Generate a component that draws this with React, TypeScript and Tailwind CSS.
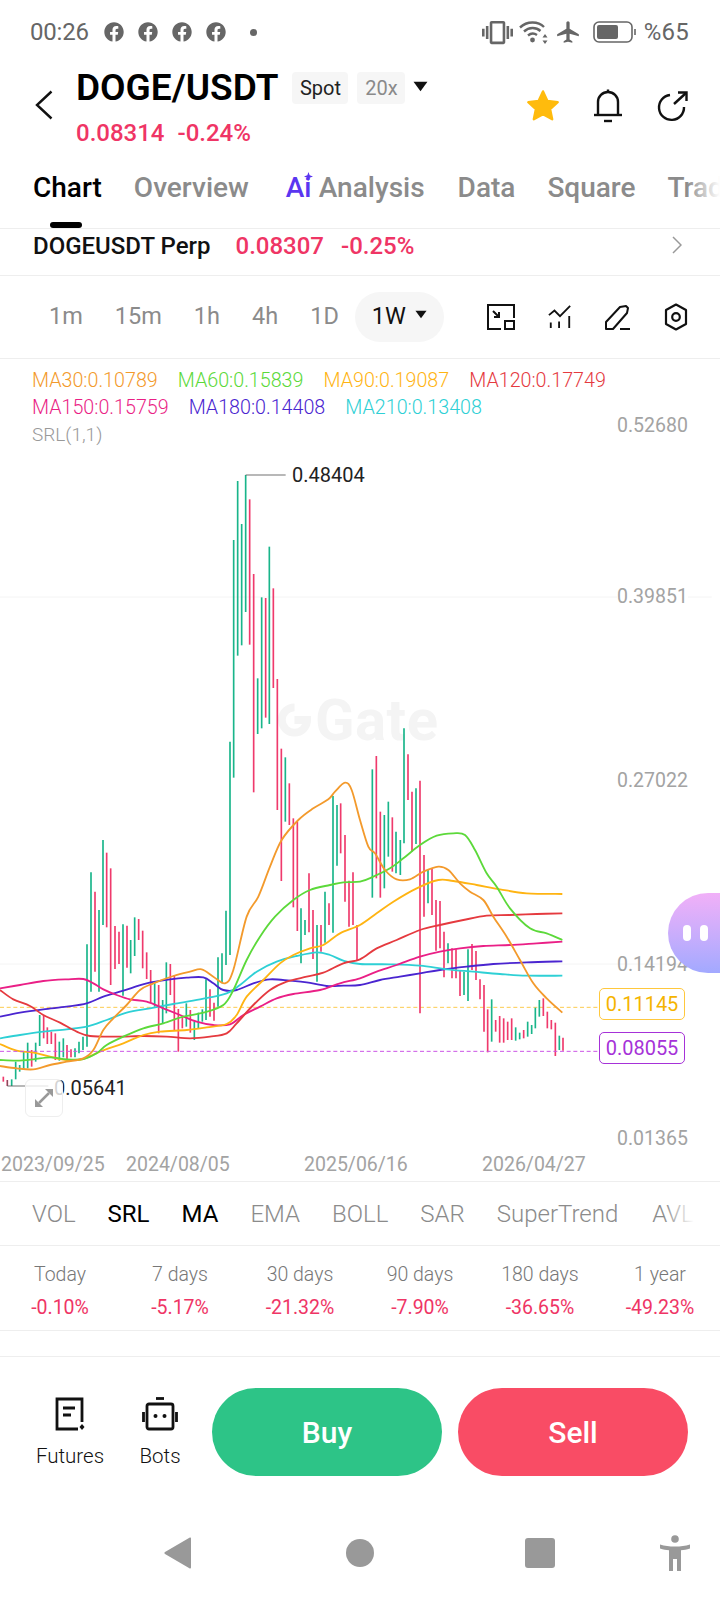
import { FaFacebook } from "react-icons/fa";
import { MdVibration, MdAirplanemodeActive } from "react-icons/md";

type Bar = [number, number, number, "g" | "r"];

// chart data is kept in 3x units, y = 0 sits at page y 820
const bars: Bar[] = [
  [10, 770, 785, "r"], [22, 780, 798, "r"], [35, 778, 798, "g"], [47, 725, 778, "g"], [59, 735, 755, "g"], [71, 695, 750, "g"],
  [83, 668, 745, "g"], [95, 690, 740, "r"], [107, 668, 725, "g"], [119, 585, 678, "g"], [131, 585, 655, "r"], [142, 622, 672, "r"],
  [154, 635, 672, "r"], [166, 640, 720, "r"], [178, 665, 722, "g"], [190, 655, 712, "g"], [201, 675, 720, "r"], [213, 688, 712, "r"],
  [225, 685, 712, "g"], [237, 665, 700, "g"], [249, 650, 690, "g"], [261, 373, 680, "g"], [273, 157, 515, "g"], [285, 215, 455, "r"],
  [297, 270, 515, "g"], [309, 60, 315, "g"], [320, 98, 322, "r"], [332, 145, 495, "r"], [345, 318, 447, "r"], [357, 335, 432, "r"],
  [369, 313, 527, "g"], [381, 317, 443, "r"], [392, 360, 460, "g"], [404, 292, 408, "g"], [416, 297, 360, "r"], [428, 332, 445, "r"],
  [440, 397, 477, "r"], [452, 450, 548, "r"], [464, 490, 560, "g"], [476, 495, 640, "r"], [488, 540, 610, "g"], [499, 427, 580, "g"],
  [511, 432, 525, "r"], [523, 465, 630, "r"], [535, 567, 695, "r"], [547, 590, 625, "r"], [559, 550, 620, "g"], [571, 570, 638, "r"],
  [583, 605, 660, "g"], [595, 578, 625, "g"], [607, 568, 605, "g"], [618, 478, 600, "g"], [630, 508, 590, "r"], [642, 548, 602, "r"],
  [654, 412, 560, "g"], [666, 400, 490, "g"], [678, 272, 435, "g"], [690, -235, 405, "g"], [701, -840, -127, "g"], [713, -1017, -493, "g"],
  [725, -888, -524, "g"], [737, -1035, -624, "g"], [749, -962, -526, "r"], [761, -738, -83, "r"], [773, -425, -258, "g"], [785, -668, -275, "g"],
  [797, -666, -307, "r"], [808, -820, -288, "g"], [820, -695, -396, "r"], [832, -423, -30, "r"], [844, -214, 183, "r"], [856, -188, 5, "g"],
  [868, -110, 15, "r"], [880, -5, 262, "r"], [892, 5, 333, "r"], [903, 265, 430, "g"], [915, 300, 345, "g"], [927, 160, 337, "r"],
  [939, 270, 417, "r"], [951, 315, 485, "g"], [963, 315, 395, "r"], [975, 215, 368, "g"], [987, 250, 315, "r"], [999, -72, 338, "g"],
  [1011, -45, 137, "g"], [1022, -50, 100, "r"], [1035, 45, 245, "r"], [1047, 182, 320, "r"], [1059, 157, 315, "r"], [1071, 315, 420, "r"],
  [1117, -152, 233, "g"], [1129, -192, 175, "r"], [1141, -25, 233, "r"], [1153, -15, 205, "g"], [1165, -55, 110, "g"], [1177, -8, 155, "r"],
  [1188, 35, 160, "g"], [1201, 60, 165, "g"], [1212, -275, 70, "g"], [1224, -197, -60, "r"], [1236, -85, 95, "r"], [1248, -95, 72, "g"],
  [1260, -118, 580, "r"], [1272, 105, 290, "r"], [1284, 150, 250, "g"], [1296, 145, 285, "r"], [1308, 240, 392, "r"], [1320, 243, 385, "r"],
  [1332, 335, 472, "r"], [1344, 370, 430, "g"], [1356, 385, 475, "r"], [1368, 388, 475, "r"], [1380, 450, 528, "r"], [1392, 455, 525, "g"],
  [1404, 388, 543, "g"], [1416, 372, 450, "r"], [1428, 393, 480, "r"], [1440, 478, 538, "r"], [1452, 495, 635, "r"], [1463, 568, 697, "r"],
  [1475, 538, 665, "g"], [1487, 600, 635, "r"], [1499, 588, 668, "r"], [1511, 595, 668, "r"], [1523, 605, 660, "r"], [1535, 595, 660, "r"],
  [1547, 622, 662, "g"], [1559, 638, 658, "g"], [1571, 630, 655, "r"], [1583, 605, 650, "g"], [1595, 615, 642, "g"], [1606, 563, 625, "g"],
  [1618, 540, 590, "g"], [1630, 535, 588, "r"], [1642, 575, 625, "r"], [1654, 600, 628, "r"], [1666, 608, 708, "r"], [1678, 647, 690, "g"],
  [1689, 653, 692, "r"],
];

const maLines: { color: string; pts: number[][] }[] = [
  { color: "#4a25d0", pts: [[0,590],[60,578],[130,568],[200,560],[260,550],[310,530],[370,512],[440,490],[510,478],[560,473],[610,472],[640,490],[670,510],[710,510],[760,490],[810,478],[870,482],[920,487],[980,498],[1030,497],[1080,495],[1140,480],[1200,470],[1260,460],[1320,450],[1400,440],[1480,432],[1580,427],[1687,424]] },
  { color: "#2ed0d5", pts: [[0,655],[60,645],[130,635],[200,628],[260,620],[320,600],[380,578],[450,565],[520,552],[600,538],[680,520],[720,495],[770,455],[830,425],[890,408],[950,397],[990,405],[1030,422],[1080,432],[1170,433],[1260,437],[1340,448],[1420,455],[1500,462],[1580,467],[1687,467]] },
  { color: "#ea1f86", pts: [[0,505],[60,495],[130,483],[200,478],[250,477],[280,490],[310,508],[350,525],[390,538],[440,545],[490,565],[540,585],[590,605],[640,615],[690,613],[730,585],[780,560],[830,535],[880,522],[960,510],[1020,490],[1080,475],[1130,455],[1190,435],[1260,410],[1320,395],[1380,385],[1450,378],[1530,375],[1610,370],[1687,365]] },
  { color: "#e53a3f", pts: [[0,510],[40,538],[90,558],[130,585],[180,608],[230,635],[270,648],[350,650],[430,648],[500,650],[570,655],[630,650],[680,640],[710,610],[760,555],[810,510],[860,485],[920,470],[970,458],[1030,430],[1080,418],[1130,385],[1190,360],[1260,330],[1320,315],[1390,300],[1460,287],[1530,285],[1610,282],[1687,280]] },
  { color: "#ffb412", pts: [[0,672],[50,692],[100,698],[150,710],[200,720],[250,717],[300,695],[370,670],[430,645],[480,635],[560,630],[620,622],[680,612],[710,585],[740,530],[790,480],[840,430],[880,405],[930,385],[970,375],[1020,340],[1080,315],[1130,280],[1180,245],[1250,205],[1315,180],[1360,183],[1430,195],[1500,208],[1580,220],[1687,222]] },
  { color: "#5cd93a", pts: [[0,720],[50,722],[100,718],[150,712],[200,718],[250,717],[290,700],[320,675],[370,650],[430,625],[490,610],[550,590],[610,578],[670,555],[700,510],[740,420],[780,350],[825,290],[880,240],[930,210],[990,195],[1030,187],[1080,185],[1120,170],[1170,145],[1210,115],[1260,75],[1310,47],[1360,40],[1395,45],[1425,90],[1460,160],[1490,200],[1530,265],[1590,325],[1640,340],[1687,360]] },
  { color: "#f39a2c", pts: [[0,738],[50,745],[100,748],[150,735],[200,725],[250,715],[280,690],[310,630],[340,595],[380,555],[420,510],[460,490],[520,468],[570,455],[605,448],[640,470],[675,490],[700,450],[740,290],[775,230],[810,140],[845,60],[895,0],[940,-35],[985,-62],[1005,-85],[1035,-112],[1055,-90],[1080,0],[1105,80],[1125,100],[1155,150],[1190,178],[1230,178],[1270,155],[1315,140],[1345,150],[1380,190],[1410,215],[1450,240],[1480,290],[1520,350],[1560,420],[1600,490],[1640,535],[1687,578]] },
];

// catmull-rom through the points, so the averages stay smooth
function smooth(pts: number[][]) {
  let d = `M${pts[0][0]} ${pts[0][1]}`;
  for (let i = 0; i < pts.length - 1; i++) {
    const p0 = pts[i - 1] || pts[i];
    const p1 = pts[i];
    const p2 = pts[i + 1];
    const p3 = pts[i + 2] || p2;
    const c1x = p1[0] + (p2[0] - p0[0]) / 6;
    const c1y = p1[1] + (p2[1] - p0[1]) / 6;
    const c2x = p2[0] - (p3[0] - p1[0]) / 6;
    const c2y = p2[1] - (p3[1] - p1[1]) / 6;
    d += ` C${c1x} ${c1y} ${c2x} ${c2y} ${p2[0]} ${p2[1]}`;
  }
  return d;
}

const stats = [
  ["Today", "-0.10%"],
  ["7 days", "-5.17%"],
  ["30 days", "-21.32%"],
  ["90 days", "-7.90%"],
  ["180 days", "-36.65%"],
  ["1 year", "-49.23%"],
];

function Triangle({ className }: { className: string }) {
  return (
    <svg viewBox="0 0 14 10" className={className} fill="currentColor">
      <path d="M0.5 0.5h13L7 9.5z" />
    </svg>
  );
}

function StatusBar() {
  return (
    <div className="flex h-[64px] items-center pl-[30px] pr-[31px] text-[#666]">
      <span className="w-[61px] text-[24px] tracking-[-0.2px]">00:26</span>
      <div className="ml-[13px] flex gap-[14px] text-[20px]">
        <FaFacebook />
        <FaFacebook />
        <FaFacebook />
        <FaFacebook />
      </div>
      <span className="ml-[24px] h-[7px] w-[7px] rounded-full bg-[#666]" />
      <div className="ml-auto flex items-center">
        <MdVibration className="text-[31px]" />
        <svg viewBox="0 0 30 26" className="ml-[6px] h-[26px] w-[30px]" fill="none" stroke="#666" strokeWidth="2.4">
          <path d="M1 8.5C8 2 19 2 25 8" />
          <path d="M5 12.5C10 8 17 8 21.5 12" />
          <path d="M9 16.5C12 14 15 14 18 16" />
          <circle cx="13.5" cy="21" r="2.4" fill="#666" stroke="none" />
          <path d="M26 15l2.5 3.5h-5zM26 25l2.5-3.5h-5z" fill="#666" stroke="none" />
        </svg>
        <MdAirplanemodeActive className="ml-[6px] text-[26px]" />
        <svg viewBox="0 0 44 22" className="ml-[12px] h-[22px] w-[44px]" fill="none">
          <rect x="1" y="1" width="38" height="20" rx="5" stroke="#666" strokeWidth="1.6" />
          <rect x="4" y="4" width="21" height="14" rx="2" fill="#666" />
          <path d="M42 8v6" stroke="#666" strokeWidth="1.6" />
        </svg>
        <span className="ml-[7px] text-[24px] tracking-[0.2px]">%65</span>
      </div>
    </div>
  );
}

function Header() {
  return (
    <div className="flex h-[92px] items-start">
      <svg viewBox="0 0 18 30" className="ml-[35px] mt-[26px] h-[30px] w-[18px]" fill="none" stroke="#111" strokeWidth="2.4">
        <path d="M16.5 1.5L2 15l14.5 13.5" />
      </svg>
      <div className="ml-[23px] pt-[1px]">
        <div className="flex items-center">
          <span className="text-[37px] font-semibold leading-[46px] text-black">DOGE/USDT</span>
          <span className="ml-[14px] flex h-[32px] w-[56px] items-center justify-center rounded-[4px] bg-[#f6f6f6] text-[20px] text-[#222]">Spot</span>
          <span className="ml-[9px] flex h-[32px] w-[48px] items-center justify-center rounded-[4px] bg-[#f6f6f6] text-[20px] text-[#8a8a8a]">20x</span>
          <Triangle className="ml-[8px] mb-[4px] h-[11px] w-[15px] text-[#111]" />
        </div>
        <div className="mt-[8px] flex text-[24px] font-medium leading-[28px] text-[#ef3565]">
          <span>0.08314</span>
          <span className="ml-[13px]">-0.24%</span>
        </div>
      </div>
      <div className="ml-auto mt-[23px] flex items-center pr-[31px]">
        <svg viewBox="0 0 24 24" className="h-[38px] w-[38px]" fill="#ffbb0d" stroke="#ffbb0d" strokeWidth="1.5" strokeLinejoin="round">
          <path d="M12 2.8l2.8 6 6.5.8-4.8 4.4 1.3 6.4L12 17.2l-5.8 3.2 1.3-6.4L2.700 9.600l6.500-.8z" />
        </svg>
        <svg viewBox="0 0 30 34" className="ml-[31px] h-[34px] w-[30px]" fill="none" stroke="#111" strokeWidth="2.400">
          <path d="M5 25V13a10 10 0 0 1 20 0v12" />
          <path d="M1 26h28" />
          <path d="M15 0.500v3" />
          <path d="M11 32h8" />
        </svg>
        <svg viewBox="0 0 32 32" className="ml-[34px] h-[32px] w-[32px]" fill="none" stroke="#111" strokeWidth="2.400">
          <path d="M27 17A12.500 12.500 0 1 1 13 5" />
          <path d="M17 14L29 3" />
          <path d="M21 2.500h8.500V11" />
        </svg>
      </div>
    </div>
  );
}

function Tabs() {
  return (
    <div className="relative h-[73px] overflow-hidden border-b border-[#eeeeee]">
      <div className="flex h-[64px] items-center gap-[32px] pl-[33px] text-[28px] font-medium whitespace-nowrap text-[#8b8b8b]">
        <span className="text-black">Chart</span>
        <span>Overview</span>
        <span className="ml-[5px] flex items-center gap-[8px]">
          <span className="relative w-[25px] text-[#5a36f0]">
            Ai
            <svg viewBox="0 0 10 10" className="absolute right-[-2px] top-[5px] h-[9px] w-[9px]" fill="#5a36f0">
              <path d="M5 0l1.300 3.700L10 5 6.300 6.300 5 10 3.700 6.300 0 5l3.700-1.300z" />
            </svg>
          </span>
          Analysis
        </span>
        <span className="ml-[1px]">Data</span>
        <span>Square</span>
        <span>Trade</span>
      </div>
      <div className="absolute bottom-0 left-[50px] h-[6px] w-[32px] rounded-[3px] bg-black" />
      <div className="absolute right-0 top-0 h-full w-[34px] bg-gradient-to-r from-white/0 to-white" />
    </div>
  );
}

function PerpRow() {
  return (
    <div className="flex h-[47px] items-start border-b border-[#eeeeee] pl-[33px] pr-[38px] text-[24px] font-medium leading-[34px]">
      <span className="text-[#111]">DOGEUSDT Perp</span>
      <span className="ml-[25px] text-[#ef3565]">0.08307</span>
      <span className="ml-[17px] text-[#ef3565]">-0.25%</span>
      <svg viewBox="0 0 10 18" className="ml-auto mt-[7px] h-[18px] w-[10px]" fill="none" stroke="#999" strokeWidth="1.500">
        <path d="M1 1l8 8-8 8" />
      </svg>
    </div>
  );
}

function Timeframes() {
  return (
    <div className="flex h-[83px] items-center border-b border-[#eeeeee] pl-[49px] pr-[32px] text-[23.500px] text-[#8b8b8b]">
      <div className="flex items-center gap-[32px]">
        <span>1m</span>
        <span>15m</span>
        <span>1h</span>
        <span>4h</span>
        <span>1D</span>
        <span className="-ml-[16px] flex h-[50px] w-[89px] items-center justify-center gap-[9px] rounded-full bg-[#f6f6f6] text-[#111]">
          1W
          <Triangle className="mb-[5px] h-[9px] w-[12px]" />
        </span>
      </div>
      <div className="ml-auto flex items-center gap-[33px]">
        <svg viewBox="0 0 28 26" className="h-[26px] w-[28px]" fill="none" stroke="#111" strokeWidth="2">
          <path d="M14 25H1V1h26v13" />
          <path d="M6 7l6 6M12 8v5H7" />
          <rect x="18" y="17" width="9" height="8" />
        </svg>
        <svg viewBox="0 0 26 26" className="h-[26px] w-[24px]" fill="none" stroke="#111" strokeWidth="2">
          <path d="M1 11l6-5 6 6L24 1" />
          <path d="M3 19v6M12 18v7M23 12v13" />
        </svg>
        <svg viewBox="0 0 26 26" className="h-[26px] w-[26px]" fill="none" stroke="#111" strokeWidth="2">
          <path d="M1 25v-7L15 3l6-1 2 2-1 5L8 25z" strokeLinejoin="round" />
          <path d="M15 25h10" />
        </svg>
        <svg viewBox="0 0 24 28" className="h-[28px] w-[24px]" fill="none" stroke="#111" strokeWidth="2.200">
          <path d="M12 1.500l10 5.500v14l-10 5.500L2 21V7z" strokeLinejoin="round" />
          <circle cx="12" cy="14" r="3.800" />
        </svg>
      </div>
    </div>
  );
}

function Chart() {
  const legend = [
    [["MA30:0.10789", "text-[#f39a2c]"], ["MA60:0.15839", "text-[#5cd93a]"], ["MA90:0.19087", "text-[#ffb412]"], ["MA120:0.17749", "text-[#e53a3f]"]],
    [["MA150:0.15759", "text-[#ea1f86]"], ["MA180:0.14408", "text-[#4a25d0]"], ["MA210:0.13408", "text-[#2ed0d5]"]],
  ];
  return (
    <div className="relative h-[823px] overflow-hidden border-b border-[#eeeeee]">
      <div className="absolute left-[278px] top-[339px] flex items-center gap-[4px] text-[#f4f4f4]">
        <svg viewBox="0 0 34 36" className="h-[36px] w-[33px]" fill="none" stroke="currentColor" strokeWidth="8">
          <path d="M17 5A13 13 0 1 0 30 18H17" />
        </svg>
        <span className="text-[58px] font-bold leading-[44px] tracking-[0.5px]">Gate</span>
      </div>

      <svg viewBox="0 -1383 2160 2469" className="absolute left-0 top-0 h-[823px] w-[720px]" fill="none">
        <path d="M0 -669H2135M0 432H2135" stroke="#eeeeee" strokeWidth="2" />
        <path d="M0 562H1800" stroke="#fbc02d" strokeWidth="2.500" strokeDasharray="12 8" />
        {bars.map(([x, top, bottom, c]) => (
          <path key={x} d={`M${x} ${top}V${bottom}`} stroke={c === "g" ? "#19b58a" : "#ef3a6c"} strokeWidth="5" />
        ))}
        {maLines.map((l) => (
          <path key={l.color} d={smooth(l.pts)} stroke={l.color} strokeWidth="5.500" strokeLinejoin="round" />
        ))}
        <path d="M0 694H1800" stroke="#cc55e6" strokeWidth="3" strokeDasharray="12 8" />
        <path d="M737 -1035H857" stroke="#555" strokeWidth="2.500" />
        <path d="M22 780V798H145" stroke="#555" strokeWidth="2.500" />
      </svg>

      <div className="relative pl-[32px] pt-[8px] text-[19.700px] font-light leading-[27px]">
        {legend.map((row, i) => (
          <div key={i} className="flex gap-[20px]">
            {row.map(([label, color]) => (
              <span key={label} className={color}>{label}</span>
            ))}
          </div>
        ))}
        <div className="text-[19px] text-[#999]">SRL(1,1)</div>
      </div>

      <span className="absolute left-[292px] top-[103px] text-[20px] leading-[26px] text-[#222]">0.48404</span>
      <span className="absolute left-[54px] top-[716px] text-[20px] leading-[26px] text-[#222]">0.05641</span>

      <span className="absolute left-[617px] top-[54px] text-[19.500px] leading-[26px] text-[#a3a3a3]">0.52680</span>
      <span className="absolute left-[617px] top-[225px] bg-white text-[19.500px] leading-[26px] text-[#a3a3a3]">0.39851</span>
      <span className="absolute left-[617px] top-[409px] text-[19.500px] leading-[26px] text-[#a3a3a3]">0.27022</span>
      <span className="absolute left-[617px] top-[593px] text-[19.500px] leading-[26px] text-[#a3a3a3]">0.14194</span>
      <span className="absolute left-[617px] top-[767px] text-[19.500px] leading-[26px] text-[#a3a3a3]">0.01365</span>

      <span className="absolute left-[599px] top-[629px] flex h-[32px] w-[86px] items-center justify-center rounded-[5px] border border-[#ffc83d] bg-white text-[20px] text-[#f5b400]">0.11145</span>
      <span className="absolute left-[599px] top-[673px] flex h-[32px] w-[86px] items-center justify-center rounded-[5px] border border-[#a632d8] bg-white text-[20px] text-[#a632d8]">0.08055</span>

      <div className="absolute left-[25px] top-[720px] flex h-[38px] w-[38px] items-center justify-center rounded-[6px] border border-[#eeeeee] bg-white/80">
        <svg viewBox="0 0 20 20" className="h-[20px] w-[20px]" fill="#999" stroke="#999" strokeWidth="2.500">
          <path d="M5 15L15 5" />
          <path d="M11 1H19V9zM1 11V19H9z" stroke="none" />
        </svg>
      </div>

      <div className="absolute left-[668px] top-[534px] flex h-[80px] w-[60px] items-center gap-[9px] rounded-l-[40px] bg-gradient-to-b from-[#f1b0f8] to-[#a2a9ff] pl-[15px]">
        <span className="h-[16px] w-[8px] rounded-full bg-white" />
        <span className="h-[16px] w-[8px] rounded-full bg-white" />
      </div>

      <span className="absolute left-[1px] top-[793px] text-[19.500px] leading-[26px] text-[#a3a3a3]">2023/09/25</span>
      <span className="absolute left-[126px] top-[793px] text-[19.500px] leading-[26px] text-[#a3a3a3]">2024/08/05</span>
      <span className="absolute left-[304px] top-[793px] text-[19.500px] leading-[26px] text-[#a3a3a3]">2025/06/16</span>
      <span className="absolute left-[482px] top-[793px] text-[19.500px] leading-[26px] text-[#a3a3a3]">2026/04/27</span>
    </div>
  );
}

function Indicators() {
  return (
    <div className="relative flex h-[64px] items-center gap-[32px] overflow-hidden border-b border-[#eeeeee] pl-[32px] text-[24px] font-light whitespace-nowrap text-[#8b8b8b]">
      <span>VOL</span>
      <span className="font-normal text-black">SRL</span>
      <span className="font-normal text-black">MA</span>
      <span>EMA</span>
      <span>BOLL</span>
      <span>SAR</span>
      <span>SuperTrend</span>
      <span className="ml-[2px]">AVL</span>
      <div className="absolute right-[26px] top-0 h-full w-[30px] bg-gradient-to-r from-white/0 to-white" />
      <div className="absolute right-0 top-0 h-full w-[26px] bg-white" />
    </div>
  );
}

function Stats() {
  return (
    <div className="grid h-[85px] grid-cols-6 border-b border-[#eeeeee] pt-[12px] text-center text-[19.500px] leading-[33px]">
      {stats.map(([label, value]) => (
        <div key={label}>
          <div className="font-light text-[#777]">{label}</div>
          <div className="text-[#ef3565]">{value}</div>
        </div>
      ))}
    </div>
  );
}

function TradeBar() {
  return (
    <div className="flex h-[143px] items-start border-t border-[#eeeeee] pt-[31px]">
      <div className="ml-[35px] flex w-[70px] flex-col items-center">
        <svg viewBox="0 0 30 34" className="mt-[9px] h-[34px] w-[30px]" fill="none" stroke="#111" strokeWidth="2.800">
          <path d="M27 25V2H2v30h21" />
          <path d="M8 11h12M8 18h8" />
          <path d="M27 27l2.500 3-2.500 3-2.500-3z" fill="#111" stroke="none" />
        </svg>
        <span className="mt-[12px] text-[20.500px] font-light leading-[26px] text-[#111]">Futures</span>
      </div>
      <div className="ml-[33px] flex w-[44px] flex-col items-center">
        <svg viewBox="0 0 36 34" className="mt-[9px] h-[34px] w-[36px]" fill="none" stroke="#111" strokeWidth="2.800">
          <path d="M14 1.500h8" />
          <rect x="5" y="7" width="26" height="25" rx="2" />
          <path d="M1.500 15v10M34.500 15v10" />
          <circle cx="13.500" cy="19" r="2" fill="#111" stroke="none" />
          <circle cx="22.500" cy="19" r="2" fill="#111" stroke="none" />
        </svg>
        <span className="mt-[12px] text-[20.500px] font-light leading-[26px] text-[#111]">Bots</span>
      </div>
      <button className="ml-[30px] h-[88px] w-[230px] rounded-full bg-[#2dc487] text-[30px] font-medium text-white">Buy</button>
      <button className="ml-[16px] h-[88px] w-[230px] rounded-full bg-[#f94c65] text-[30px] font-medium text-white">Sell</button>
    </div>
  );
}

function NavBar() {
  return (
    <div className="flex h-[100px] items-start pt-[36px]">
      <svg viewBox="0 0 28 32" className="ml-[164px] mt-[2px] h-[32px] w-[28px]" fill="#999">
        <path d="M27 1.500v29a1 1 0 0 1-1.600.8L1 17a1.300 1.300 0 0 1 0-2L25.400.7A1 1 0 0 1 27 1.500z" />
      </svg>
      <span className="ml-[154px] mt-[4px] h-[28px] w-[28px] rounded-full bg-[#999]" />
      <span className="ml-[151px] mt-[3px] h-[30px] w-[30px] rounded-[3px] bg-[#999]" />
      <svg viewBox="0 0 30 36" className="ml-[105px] h-[36px] w-[30px]" fill="#999">
        <circle cx="15" cy="4" r="3.800" />
        <path d="M0 9.500C5 11 9 11.500 15 11.500s10-.5 15-2v4c-3.500 1-6 1.500-9 1.800V36h-4V24h-4v12H9V15.300c-3-.3-5.500-.8-9-1.800z" />
      </svg>
    </div>
  );
}

export default function App() {
  return (
    <div className="h-[1600px] w-[720px] overflow-hidden bg-white font-['Roboto',sans-serif]">
      <StatusBar />
      <Header />
      <Tabs />
      <PerpRow />
      <Timeframes />
      <Chart />
      <Indicators />
      <Stats />
      <div className="h-[25px]" />
      <TradeBar />
      <NavBar />
    </div>
  );
}
